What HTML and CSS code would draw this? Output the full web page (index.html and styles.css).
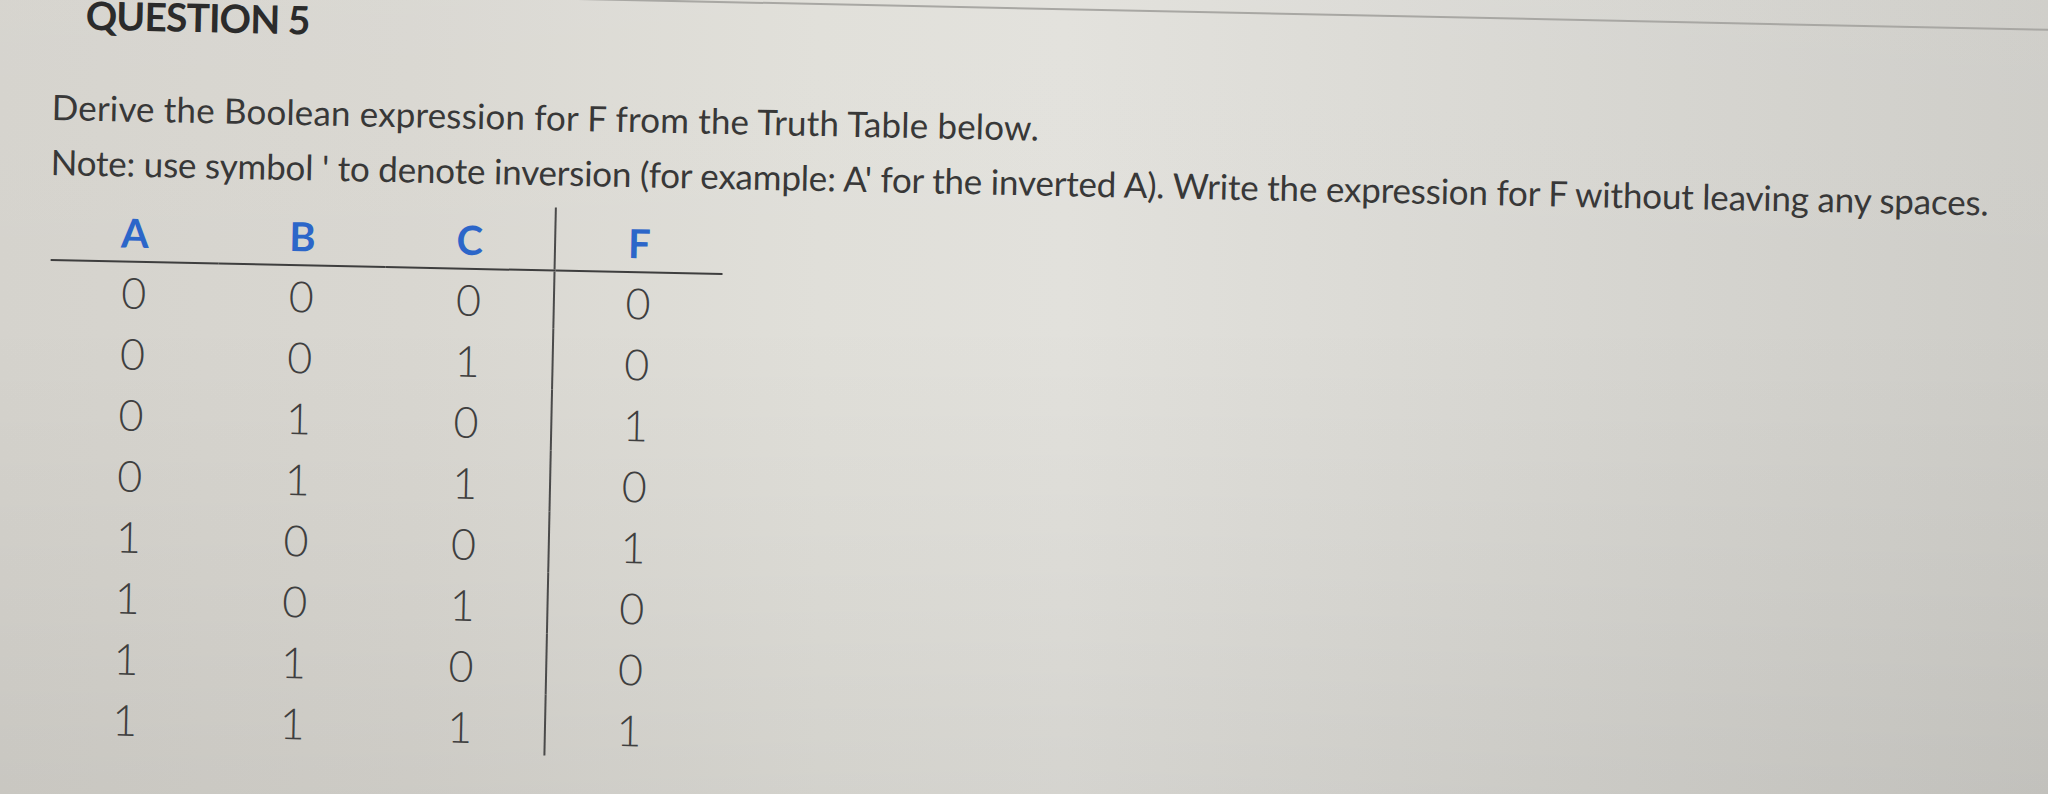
FILE: index.html
```html
<!DOCTYPE html>
<html lang="en">
<head>
<meta charset="utf-8">
<title>Question 5</title>
<link rel="stylesheet" href="styles.css">
</head>
<body>
<div class="screen">
  <div class="sheet">
    <div class="q-head">
      <h2 class="q-title">QUESTION 5</h2>
    </div>
    <div class="q-body">
      <p class="prompt first">Derive the Boolean expression for F from the Truth Table below.</p>
      <p class="prompt second">Note: use symbol ' to denote inversion (for example: A' for the inverted A). Write the expression for F without leaving any spaces.</p>
      <table class="truth">
        <thead>
          <tr><th>A</th><th>B</th><th>C</th><th class="out">F</th></tr>
        </thead>
        <tbody>
          <tr><td>0</td><td>0</td><td>0</td><td class="out">0</td></tr>
          <tr><td>0</td><td>0</td><td>1</td><td class="out">0</td></tr>
          <tr><td>0</td><td>1</td><td>0</td><td class="out">1</td></tr>
          <tr><td>0</td><td>1</td><td>1</td><td class="out">0</td></tr>
          <tr><td>1</td><td>0</td><td>0</td><td class="out">1</td></tr>
          <tr><td>1</td><td>0</td><td>1</td><td class="out">0</td></tr>
          <tr><td>1</td><td>1</td><td>0</td><td class="out">0</td></tr>
          <tr><td>1</td><td>1</td><td>1</td><td class="out">1</td></tr>
        </tbody>
      </table>
    </div>
  </div>
</div>
</body>
</html>
```

FILE: styles.css
```css
html, body {
  margin: 0;
  padding: 0;
  width: 2048px;
  height: 794px;
  overflow: hidden;
}

body {
  font-family: Lato, "Open Sans", "Liberation Sans", sans-serif;
  background:
    linear-gradient(180deg, rgba(255,255,255,0.04) 0%, rgba(255,255,255,0) 40%, rgba(0,0,0,0.03) 75%, rgba(0,0,0,0.06) 100%),
    linear-gradient(90deg, #d5d3cd 0%, #d9d7d1 20%, #e0dfd9 40%, #e2e1dc 52%, #dcdbd6 66%, #d5d4cf 82%, #cecdc8 100%);
}

.screen {
  width: 2048px;
  height: 794px;
  overflow: hidden;
}

.sheet {
  width: 2140px;
  margin-top: -13px;
  border-top: 2px solid #a8a7a3;
  transform-origin: 52px 113px;
  transform: rotate(1.2deg);
}

.q-head {
  padding: 2px 0 0 84px;
}

.q-title {
  margin: 0;
  font-size: 39px;
  line-height: 47px;
  font-weight: 700;
  letter-spacing: -0.9px;
  color: #2b2b2b;
}

.q-body {
  padding-left: 52px;
}

.prompt {
  margin: 0;
  font-size: 35px;
  line-height: 55px;
  color: #383838;
  white-space: nowrap;
}

.prompt.first {
  margin-top: 41px;
  letter-spacing: 0.15px;
}

.prompt.second {
  letter-spacing: -0.2px;
}

.truth {
  margin: 8px 0 0 2px;
  border-collapse: collapse;
  table-layout: fixed;
  width: 670px;
}

.truth th,
.truth td {
  width: 167.5px;
  padding: 0;
  text-align: center;
}

.truth th {
  padding: 11px 0 4px;
  font-size: 40px;
  line-height: 47px;
  font-weight: 700;
  color: #2c66c9;
  border-bottom: 2px solid #3e3e3e;
}

.truth td {
  padding-top: 6px;
  font-size: 43px;
  line-height: 55px;
  font-weight: 300;
  color: #3f3f3f;
}

.truth tbody tr:first-child td {
  padding-top: 2px;
}

.truth .out {
  border-left: 2px solid #4a4a4a;
}
```
